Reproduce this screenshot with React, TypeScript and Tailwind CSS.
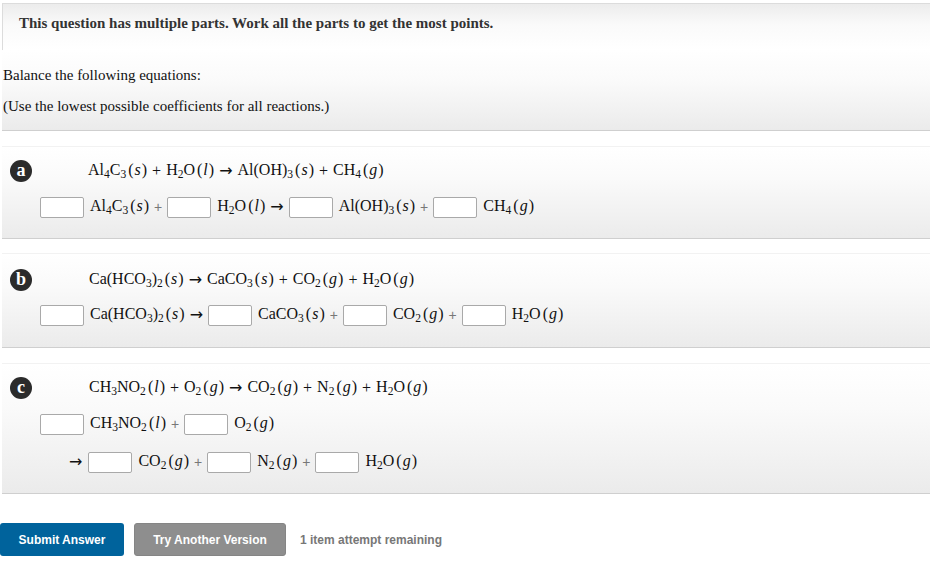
import React from "react";

const F = ({ t }: { t: string }) => {
  const parts: React.ReactNode[] = [];
  let buf = "";
  let k = 0;
  for (const ch of t) {
    if (/[0-9]/.test(ch)) {
      if (buf) parts.push(<span key={k++}>{buf}</span>);
      buf = "";
      parts.push(
        <span key={k++} className="text-[0.72em] align-[-0.25em]">
          {ch}
        </span>
      );
    } else buf += ch;
  }
  if (buf) parts.push(<span key={k++}>{buf}</span>);
  return <span>{parts}</span>;
};

const S = ({ f, s }: { f: string; s: string }) => (
  <span className="whitespace-nowrap">
    <F t={f} />
    <span className="ml-[2px]">
      (<i className="mx-[1px]">{s}</i>)
    </span>
  </span>
);

type Sp = { f: string; s: string };

const Arrow = ({ cls }: { cls: string }) => (
  <span className={"font-['DejaVu_Sans',sans-serif] text-[16px] leading-none text-[#111] " + cls}>→</span>
);

const Eq = ({ left, right }: { left: Sp[]; right: Sp[] }) => (
  <div className="flex items-center h-[24px] text-[16px] text-[#111] font-['Liberation_Serif',serif] whitespace-nowrap">
    {left.map((x, i) => (
      <React.Fragment key={"l" + i}>
        {i > 0 && <span className="mx-[5px]">+</span>}
        <S f={x.f} s={x.s} />
      </React.Fragment>
    ))}
    <Arrow cls="mx-[5px]" />
    {right.map((x, i) => (
      <React.Fragment key={"r" + i}>
        {i > 0 && <span className="mx-[5px]">+</span>}
        <S f={x.f} s={x.s} />
      </React.Fragment>
    ))}
  </div>
);

const Box = () => (
  <span className="inline-block w-[44px] h-[21px] border border-[#a9a9a9] rounded-[2px] bg-white shrink-0" />
);

const Item = ({ sp, sep }: { sp: Sp; sep?: string }) => (
  <>
    <Box />
    <span className="ml-[6px]">
      <S f={sp.f} s={sp.s} />
    </span>
    {sep === "+" && (
      <span className="ml-[5px] mr-[5px] text-[14px] text-[#777] font-['Liberation_Sans',sans-serif]">+</span>
    )}
    {sep === "→" && <Arrow cls="ml-[5px] mr-[5px]" />}
  </>
);

const Row = ({ children, cls = "" }: { children: React.ReactNode; cls?: string }) => (
  <div
    className={
      "flex items-center h-[24px] text-[16px] text-[#111] font-['Liberation_Serif',serif] whitespace-nowrap " +
      cls
    }
  >
    {children}
  </div>
);

const Badge = ({ l }: { l: string }) => (
  <div className="w-[22px] h-[22px] rounded-full bg-[#2b2b2b] text-white flex items-center justify-center font-['Liberation_Serif',serif] font-bold text-[18px] leading-none pb-[2px]">
    {l}
  </div>
);

const Panel = ({ children, cls }: { children: React.ReactNode; cls: string }) => (
  <div
    className={
      "ml-[2px] border-t border-t-[#f2f2f2] border-b border-b-[#cfcfcf] bg-[linear-gradient(to_bottom,#ffffff_0%,#fafafa_35%,#ebebeb_100%)] " +
      cls
    }
  >
    {children}
  </div>
);

export default function App() {
  return (
    <div className="w-[930px] h-[564px] bg-white overflow-hidden">
      <div className="pt-[3px]">
        <div className="ml-[2px] h-[47px] border-t border-l border-[#dcdcdc] bg-[linear-gradient(to_bottom,#ececec_0%,#fafafa_45%,#ffffff_100%)] pl-[16px] pt-[10px]">
          <div className="font-['Liberation_Serif',serif] font-bold text-[15px] leading-[18px] text-[#333]">
            This question has multiple parts. Work all the parts to get the most points.
          </div>
        </div>
        <div className="ml-[2px] pl-[1px] pt-[16px] pb-[15px] border-b border-[#cfcfcf] bg-[linear-gradient(to_bottom,#ffffff_0%,#fafafa_40%,#ebebeb_100%)] font-['Liberation_Serif',serif] text-[15px] leading-[18px] text-[#111]">
          <div>Balance the following equations:</div>
          <div className="mt-[13px]">(Use the lowest possible coefficients for all reactions.)</div>
        </div>

        {/* part a */}
        <Panel cls="mt-[15px] pt-[12px] pb-[19px]">
          <div className="flex items-center">
            <div className="w-[86px] pl-[8px]">
              <Badge l="a" />
            </div>
            <Eq
              left={[
                { f: "Al4C3", s: "s" },
                { f: "H2O", s: "l" },
              ]}
              right={[
                { f: "Al(OH)3", s: "s" },
                { f: "CH4", s: "g" },
              ]}
            />
          </div>
          <Row cls="mt-[12px] pl-[38px]">
            <Item sp={{ f: "Al4C3", s: "s" }} sep="+" />
            <Item sp={{ f: "H2O", s: "l" }} sep="→" />
            <Item sp={{ f: "Al(OH)3", s: "s" }} sep="+" />
            <Item sp={{ f: "CH4", s: "g" }} />
          </Row>
        </Panel>

        {/* part b */}
        <Panel cls="mt-[14px] pt-[14px] pb-[20px]">
          <div className="flex items-center">
            <div className="w-[87px] pl-[8px]">
              <Badge l="b" />
            </div>
            <Eq
              left={[{ f: "Ca(HCO3)2", s: "s" }]}
              right={[
                { f: "CaCO3", s: "s" },
                { f: "CO2", s: "g" },
                { f: "H2O", s: "g" },
              ]}
            />
          </div>
          <Row cls="mt-[11px] pl-[38px]">
            <Item sp={{ f: "Ca(HCO3)2", s: "s" }} sep="→" />
            <Item sp={{ f: "CaCO3", s: "s" }} sep="+" />
            <Item sp={{ f: "CO2", s: "g" }} sep="+" />
            <Item sp={{ f: "H2O", s: "g" }} />
          </Row>
        </Panel>

        {/* part c */}
        <Panel cls="mt-[15px] pt-[12px] pb-[19px]">
          <div className="flex items-center">
            <div className="w-[87px] pl-[8px]">
              <Badge l="c" />
            </div>
            <Eq
              left={[
                { f: "CH3NO2", s: "l" },
                { f: "O2", s: "g" },
              ]}
              right={[
                { f: "CO2", s: "g" },
                { f: "N2", s: "g" },
                { f: "H2O", s: "g" },
              ]}
            />
          </div>
          <Row cls="mt-[12px] pl-[38px]">
            <Item sp={{ f: "CH3NO2", s: "l" }} sep="+" />
            <Item sp={{ f: "O2", s: "g" }} />
          </Row>
          <Row cls="mt-[14px] pl-[67px]">
            <Arrow cls="mr-[6px]" />
            <Item sp={{ f: "CO2", s: "g" }} sep="+" />
            <Item sp={{ f: "N2", s: "g" }} sep="+" />
            <Item sp={{ f: "H2O", s: "g" }} />
          </Row>
        </Panel>

        <div className="mt-[29px] flex items-center font-['Liberation_Sans',Arial,sans-serif] font-bold text-[12px]">
          <div className="w-[124px] h-[33px] rounded-[3px] bg-[#00639c] text-white flex items-center justify-center">
            Submit Answer
          </div>
          <div className="ml-[10px] w-[152px] h-[33px] rounded-[3px] bg-[#8e8e8e] border border-[#858585] text-white flex items-center justify-center">
            Try Another Version
          </div>
          <div className="ml-[14px] text-[#777]">1 item attempt remaining</div>
        </div>
      </div>
    </div>
  );
}
